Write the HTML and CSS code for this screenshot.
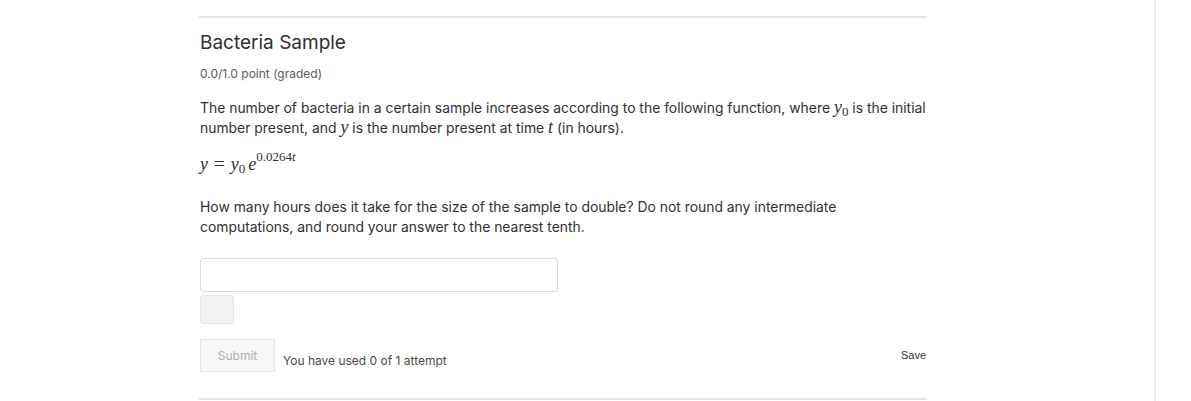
FILE: index.html
```html
<!DOCTYPE html>
<html>
  <head>
    <title>Bacteria Sample</title>
    <meta charset="utf-8" />
    <link rel="stylesheet" href="styles.css">
  </head>
  <body>
    <div class="layout">
      <div class="course-content">
        <div class="problem">
          <hr class="rule" />
          <h3 class="problem-title">Bacteria Sample</h3>
          <div class="problem-points">0.0/1.0 point (graded)</div>
          <p class="problem-text intro">
            The number of bacteria in a certain sample increases according to the following function, where
            <span class="math">y<sub>0</sub></span> is the initial number present, and
            <span class="math">y</span> is the number present at time <span class="math">t</span> (in hours).
          </p>
          <div class="formula">
            <span class="math">y</span><span class="math-op">=</span><span class="math">y<sub>0</sub></span><span class="math e">e<sup>0.0264<i>t</i></sup></span>
          </div>
          <p class="problem-text question">
            How many hours does it take for the size of the sample to double? Do not round any intermediate
            computations, and round your answer to the nearest tenth.
          </p>
          <input class="answer-input" type="text" />
          <div class="status-box"></div>
          <div class="action-row">
            <button class="submit-btn" disabled>Submit</button>
            <span class="attempts">You have used 0 of 1 attempt</span>
            <span class="save-btn">Save</span>
          </div>
          <hr class="rule bottom" />
        </div>
      </div>
    </div>
  </body>
</html>
```

FILE: styles.css
```css
body {
  margin: 0;
  padding: 0;
  background: #ffffff;
  color: #313131;
  font-family: Inter, "Noto Sans", sans-serif;
  overflow: hidden;
}
.layout {
  display: flex;
  height: 401px;
}
.course-content {
  width: 1154px;
  border-right: 2px solid #eeeeee;
  height: 401px;
}
.problem {
  width: 728px;
  margin-left: 199px;
  padding-top: 16px;
}
.rule {
  margin: 0;
  border: 0;
  height: 2px;
  background: #e6e6e6;
}
.rule.bottom {
  margin-top: 26px;
}
.problem-title {
  margin: 13px 0 0 1px;
  font-size: 19px;
  line-height: 24px;
  font-weight: 400;
  color: #313131;
}
.problem-points {
  margin: 11px 0 0 1px;
  font-size: 12px;
  line-height: 16px;
  color: #5b5b5b;
}
.problem-text {
  margin: 16px 0 0 1px;
  font-size: 13.9px;
  line-height: 20px;
  color: #313131;
}
.intro {
  margin-right: -12px;
}
.question {
  margin-top: 21px;
}
.math {
  font-family: "Liberation Serif", "DejaVu Serif", serif;
  font-style: italic;
  font-size: 18px;
  line-height: 0;
}
.math sub {
  font-style: normal;
  font-size: 13px;
  vertical-align: -3px;
  line-height: 0;
}
.math sup {
  font-style: normal;
  font-size: 13px;
  vertical-align: 9px;
  line-height: 0;
}
.formula {
  margin: 14px 0 0 1px;
  height: 24px;
  line-height: 24px;
}
.math-op {
  font-family: "Liberation Serif", "DejaVu Serif", serif;
  font-size: 19px;
  margin: 0 6px;
}
.e {
  margin-left: 3px;
}
.answer-input {
  display: block;
  margin: 21px 0 0 1px;
  width: 358px;
  height: 34px;
  box-sizing: border-box;
  border: 1px solid #dcdcdc;
  border-radius: 3px;
  background: #ffffff;
}
.status-box {
  margin: 3px 0 0 1px;
  width: 34px;
  height: 29px;
  box-sizing: border-box;
  border: 1px solid #e4e4e4;
  border-radius: 3px;
  background: #f1f1f1;
}
.action-row {
  display: flex;
  align-items: center;
  margin: 15px 0 0 1px;
}
.submit-btn {
  width: 75px;
  height: 33px;
  background: #f6f7f7;
  border: 1px solid #e6e6e6;
  border-radius: 0;
  color: #b0b0b0;
  font-family: Inter, "Noto Sans", sans-serif;
  font-size: 12px;
  padding: 0;
}
.attempts {
  margin-left: 8px;
  margin-top: 9px;
  font-size: 12px;
  color: #4a4a4a;
}
.save-btn {
  margin-left: auto;
  margin-right: 1px;
  margin-top: -1px;
  font-family: "Liberation Sans", Arial, sans-serif;
  font-size: 11px;
  color: #333333;
}
```
